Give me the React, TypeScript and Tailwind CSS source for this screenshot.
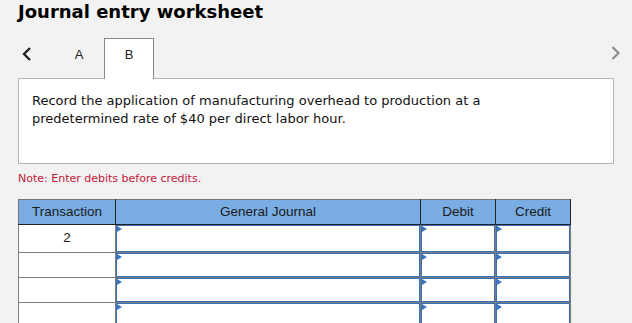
const rows = [
  { tx: "2", h: "h-[27px]" },
  { tx: "", h: "h-[24px]" },
  { tx: "", h: "h-[24px]" },
  { tx: "", h: "h-[24px]" },
];

function EntryCell({ h }: { h: string }) {
  return (
    <td className="border border-[#7d7d7d] p-0 align-top">
      <div className={`relative ${h} border border-[#3a70b8] bg-white`}>
        {/* little flag in the corner of each input */}
        <svg
          className="absolute left-0 top-0"
          width="5"
          height="6"
          viewBox="0 0 5 6"
        >
          <polygon points="0,0 5,3 0,6" fill="#3b75c2" />
        </svg>
      </div>
    </td>
  );
}

export default function App() {
  return (
    <div className="h-[323px] w-[632px] overflow-hidden bg-[#f2f2f2] text-[#222]">
      {/* Title */}
      <div className="h-[38px] pl-[18px] pt-[1px]">
        <h1 className="font-['DejaVu_Sans',Verdana,sans-serif] text-[18px] font-bold leading-[21px] text-black">
          Journal entry worksheet
        </h1>
      </div>

      {/* Tabs */}
      <div className="flex h-[40px] items-start">
        <svg
          className="ml-[22px] mt-[9px]"
          width="10"
          height="14"
          viewBox="0 0 10 14"
        >
          <polyline
            points="8,1 2,7 8,13"
            fill="none"
            stroke="#222"
            strokeWidth="2.4"
          />
        </svg>
        <div className="ml-[22px] w-[50px] pt-[9px] text-center font-['Liberation_Sans',Arial,sans-serif] text-[13px] leading-[16px]">
          A
        </div>
        <div className="relative z-10 h-[41px] w-[50px] border border-b-0 border-[#8a8a8a] bg-white pt-[8px] text-center font-['Liberation_Sans',Arial,sans-serif] text-[13px] leading-[16px]">
          B
        </div>
        <svg
          className="ml-auto mr-[12px] mt-[8px]"
          width="9"
          height="14"
          viewBox="0 0 9 14"
        >
          <polyline
            points="1.5,1 7.5,7 1.5,13"
            fill="none"
            stroke="#8c8c8c"
            strokeWidth="2.2"
          />
        </svg>
      </div>

      {/* Prompt panel */}
      <div className="ml-[18px] h-[86px] w-[596px] border border-[#b4b4b4] bg-white px-[13px] pt-[13px]">
        <p className="font-['DejaVu_Sans',Verdana,sans-serif] text-[13px] leading-[18px] text-[#111]">
          Record the application of manufacturing overhead to production at a
          <br />
          predetermined rate of $40 per direct labor hour.
        </p>
      </div>

      <p className="ml-[18px] mt-[8px] font-['DejaVu_Sans',Verdana,sans-serif] text-[11px] leading-[13px] text-[#c2183a]">
        Note: Enter debits before credits.
      </p>

      {/* Journal table */}
      <table className="ml-[18px] mt-[14px] table-fixed border-collapse font-['Liberation_Sans',Arial,sans-serif] text-[13.5px] text-[#1a1a1a]">
        <colgroup>
          <col className="w-[97px]" />
          <col className="w-[305px]" />
          <col className="w-[75px]" />
          <col className="w-[75px]" />
        </colgroup>
        <thead>
          <tr className="bg-[#79ade3]">
            <th className="h-[25px] border border-[#222] border-l-[#777] border-t-[#777] p-0 font-normal">
              Transaction
            </th>
            <th className="border border-[#222] border-t-[#777] p-0 font-normal">
              General Journal
            </th>
            <th className="border border-[#222] border-t-[#777] p-0 font-normal">
              Debit
            </th>
            <th className="border border-[#222] border-t-[#777] p-0 font-normal">
              Credit
            </th>
          </tr>
        </thead>
        <tbody>
          {rows.map((r, i) => (
            <tr key={i}>
              <td className="border border-[#7d7d7d] bg-white p-0 text-center">
                {r.tx}
              </td>
              <EntryCell h={r.h} />
              <EntryCell h={r.h} />
              <EntryCell h={r.h} />
            </tr>
          ))}
        </tbody>
      </table>
    </div>
  );
}
